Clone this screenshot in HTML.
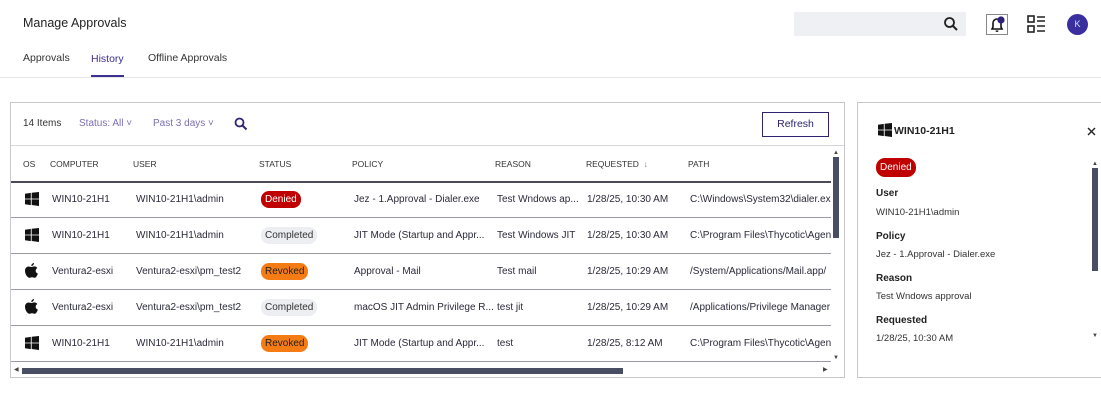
<!DOCTYPE html>
<html><head><meta charset="utf-8">
<style>
*{box-sizing:border-box;margin:0;padding:0}
body{width:1101px;height:401px;overflow:hidden;background:#fff;font-family:"Liberation Sans",sans-serif;color:#222;position:relative;font-size:10px}
.a{position:absolute;white-space:nowrap}
.hdr{font-size:8.5px;color:#333;top:159px}
.cell{font-size:10px;color:#2a2a3a}
.pill{position:absolute;height:17px;border-radius:8px;font-size:10px;display:flex;align-items:center;padding:0 4px;white-space:nowrap}
.den{background:#c00000;color:#fff}
.com{background:#eceef2;color:#333}
.rev{background:#f57c14;color:#222}
.sep{position:absolute;left:11px;width:820px;height:1px;background:#9a9aa4}
.lbl{font-size:10px;font-weight:bold;color:#222;left:876px}
.val{font-size:9.5px;color:#333;left:876px}
</style></head><body>
<div class="a" style="left:23px;top:16px;font-size:12.5px;color:#222">Manage Approvals</div>
<div class="a" style="left:23px;top:52px;font-size:10.5px;color:#333">Approvals</div>
<div class="a" style="left:91px;top:53px;font-size:10.5px;color:#3b2f8f">History</div>
<div class="a" style="left:91px;top:75px;width:33px;height:1.5px;background:#3b2f8f"></div>
<div class="a" style="left:148px;top:52px;font-size:10.5px;color:#333">Offline Approvals</div>
<div class="a" style="left:0;top:77px;width:1101px;height:1px;background:#e6e6ea"></div>

<div class="a" style="left:794px;top:12px;width:172px;height:24px;background:#eef0f3"></div>
<svg class="a" style="left:943px;top:16px" width="16" height="16" viewBox="0 0 16 16"><circle cx="6.5" cy="6.5" r="4.5" fill="none" stroke="#222" stroke-width="1.8"/><line x1="10" y1="10" x2="14" y2="14" stroke="#222" stroke-width="2"/></svg>
<svg class="a" style="left:986px;top:14px" width="22" height="21" viewBox="0 0 22 21"><rect x="0.5" y="0.5" width="21" height="20" fill="none" stroke="#888"/><path d="M6 15 L7 13 V9 a4 4 0 0 1 8 0 V13 L16 15 Z" fill="none" stroke="#111" stroke-width="1.6"/><path d="M9.5 16.5 a1.5 1.5 0 0 0 3 0" fill="#111"/><circle cx="15" cy="6" r="3.6" fill="#2d1f7a"/></svg>
<svg class="a" style="left:1027px;top:15px" width="19" height="19" viewBox="0 0 19 19" fill="none" stroke="#222" stroke-width="1.6"><rect x="1" y="1" width="6" height="6"/><rect x="1" y="11" width="6" height="6"/><path d="M10 2h8M10 6h8M10 11h8M10 16h8"/></svg>
<div class="a" style="left:1067px;top:14px;width:21px;height:21px;border-radius:50%;background:#3b2fa0;color:#bfe6ff;font-size:9px;text-align:center;line-height:21px">K</div>

<div class="a" style="left:10px;top:102px;width:835px;height:276px;border:1px solid #c8c8cc"></div>
<div class="a" style="left:11px;top:145px;width:833px;height:1px;background:#d6d6da"></div>
<div class="a" style="left:23px;top:118px;font-size:10px;color:#333">14 Items</div>
<div class="a" style="left:79px;top:118px;font-size:10px;color:#7b6fb0">Status: All &#x2C5;</div>
<div class="a" style="left:153px;top:118px;font-size:10px;color:#7b6fb0">Past 3 days &#x2C5;</div>
<svg class="a" style="left:234px;top:117px" width="14" height="14" viewBox="0 0 14 14"><circle cx="5.5" cy="5.5" r="4" fill="none" stroke="#2d2370" stroke-width="1.8"/><line x1="8.5" y1="8.5" x2="12.5" y2="12.5" stroke="#2d2370" stroke-width="2"/></svg>
<div class="a" style="left:762px;top:112px;width:67px;height:25px;border:1.3px solid #2d2370;font-size:10.5px;color:#2d2370;text-align:center;line-height:23px">Refresh</div>

<div class="a hdr" style="left:23px">OS</div>
<div class="a hdr" style="left:50px">COMPUTER</div>
<div class="a hdr" style="left:133px">USER</div>
<div class="a hdr" style="left:259px">STATUS</div>
<div class="a hdr" style="left:352px">POLICY</div>
<div class="a hdr" style="left:495px">REASON</div>
<div class="a hdr" style="left:586px">REQUESTED &nbsp;<span style="color:#7b6fb0">&#x2193;</span></div>
<div class="a hdr" style="left:688px">PATH</div>
<div class="a" style="left:11px;top:181px;width:820px;height:1.5px;background:#4a4a58"></div>
<div class="sep" style="top:217px"></div>
<div class="sep" style="top:253px"></div>
<div class="sep" style="top:289px"></div>
<div class="sep" style="top:325px"></div>
<div class="sep" style="top:361px"></div>

<div style="position:absolute;left:0;top:0;width:831px;height:401px;overflow:hidden">
<svg class="a" style="left:25px;top:192px" width="14" height="14" viewBox="0 0 13 13" fill="#111"><path d="M0 1.6l5.4-.8V6.1H0zM6.2.7L13 0v6.1H6.2zM0 6.9h5.4v5.3L0 11.4zM6.2 6.9H13V13l-6.8-.9z"/></svg>
<div class="a cell" style="left:52px;top:194px">WIN10-21H1</div>
<div class="a cell" style="left:136px;top:194px">WIN10-21H1\admin</div>
<div class="pill den" style="left:261px;top:191px">Denied</div>
<div class="a cell" style="left:354px;top:194px">Jez - 1.Approval - Dialer.exe</div>
<div class="a cell" style="left:497px;top:194px">Test Wndows ap...</div>
<div class="a cell" style="left:587px;top:194px">1/28/25, 10:30 AM</div>
<div class="a cell" style="left:690px;top:194px">C:\Windows\System32\dialer.exe</div>

<svg class="a" style="left:25px;top:228px" width="14" height="14" viewBox="0 0 13 13" fill="#111"><path d="M0 1.6l5.4-.8V6.1H0zM6.2.7L13 0v6.1H6.2zM0 6.9h5.4v5.3L0 11.4zM6.2 6.9H13V13l-6.8-.9z"/></svg>
<div class="a cell" style="left:52px;top:230px">WIN10-21H1</div>
<div class="a cell" style="left:136px;top:230px">WIN10-21H1\admin</div>
<div class="pill com" style="left:261px;top:227px">Completed</div>
<div class="a cell" style="left:354px;top:230px">JIT Mode (Startup and Appr...</div>
<div class="a cell" style="left:497px;top:230px">Test Windows JIT</div>
<div class="a cell" style="left:587px;top:230px">1/28/25, 10:30 AM</div>
<div class="a cell" style="left:690px;top:230px">C:\Program Files\Thycotic\Agent</div>

<svg class="a" style="left:25px;top:263px" width="13" height="15" viewBox="0 0 13 15" fill="#111"><path d="M9 0c0 1.5-1.2 3-2.7 3C6.2 1.5 7.5 .1 9 0zM6.5 4c1 0 1.8-.6 2.8-.6 1.2 0 2.3.6 3 1.6-2.4 1.3-2 4.8.6 5.6-.6 1.6-1.8 4.2-3.2 4.2-1 0-1.3-.6-2.6-.6-1.4 0-1.8.6-2.8.6C2.7 14.8 0 11.5 0 7.8 0 5.3 1.6 3.5 3.5 3.5 4.7 3.5 5.5 4 6.5 4z"/></svg>
<div class="a cell" style="left:52px;top:266px">Ventura2-esxi</div>
<div class="a cell" style="left:136px;top:266px">Ventura2-esxi\pm_test2</div>
<div class="pill rev" style="left:261px;top:263px">Revoked</div>
<div class="a cell" style="left:354px;top:266px">Approval - Mail</div>
<div class="a cell" style="left:497px;top:266px">Test mail</div>
<div class="a cell" style="left:587px;top:266px">1/28/25, 10:29 AM</div>
<div class="a cell" style="left:690px;top:266px">/System/Applications/Mail.app/</div>

<svg class="a" style="left:25px;top:299px" width="13" height="15" viewBox="0 0 13 15" fill="#111"><path d="M9 0c0 1.5-1.2 3-2.7 3C6.2 1.5 7.5 .1 9 0zM6.5 4c1 0 1.8-.6 2.8-.6 1.2 0 2.3.6 3 1.6-2.4 1.3-2 4.8.6 5.6-.6 1.6-1.8 4.2-3.2 4.2-1 0-1.3-.6-2.6-.6-1.4 0-1.8.6-2.8.6C2.7 14.8 0 11.5 0 7.8 0 5.3 1.6 3.5 3.5 3.5 4.7 3.5 5.5 4 6.5 4z"/></svg>
<div class="a cell" style="left:52px;top:302px">Ventura2-esxi</div>
<div class="a cell" style="left:136px;top:302px">Ventura2-esxi\pm_test2</div>
<div class="pill com" style="left:261px;top:299px">Completed</div>
<div class="a cell" style="left:354px;top:302px">macOS JIT Admin Privilege R...</div>
<div class="a cell" style="left:497px;top:302px">test jit</div>
<div class="a cell" style="left:587px;top:302px">1/28/25, 10:29 AM</div>
<div class="a cell" style="left:690px;top:302px">/Applications/Privilege Manager</div>

<svg class="a" style="left:25px;top:336px" width="14" height="14" viewBox="0 0 13 13" fill="#111"><path d="M0 1.6l5.4-.8V6.1H0zM6.2.7L13 0v6.1H6.2zM0 6.9h5.4v5.3L0 11.4zM6.2 6.9H13V13l-6.8-.9z"/></svg>
<div class="a cell" style="left:52px;top:338px">WIN10-21H1</div>
<div class="a cell" style="left:136px;top:338px">WIN10-21H1\admin</div>
<div class="pill rev" style="left:261px;top:335px">Revoked</div>
<div class="a cell" style="left:354px;top:338px">JIT Mode (Startup and Appr...</div>
<div class="a cell" style="left:497px;top:338px">test</div>
<div class="a cell" style="left:587px;top:338px">1/28/25, 8:12 AM</div>
<div class="a cell" style="left:690px;top:338px">C:\Program Files\Thycotic\Agent</div>
</div>

<div class="a" style="left:833px;top:157px;width:6px;height:81px;background:#4a4e64"></div>
<div class="a" style="left:833px;top:150px;font-size:6px;color:#444">&#x25B2;</div>
<div class="a" style="left:833px;top:355px;font-size:6px;color:#444">&#x25BC;</div>
<div class="a" style="left:22px;top:368px;width:601px;height:6px;background:#4a4e64"></div>
<div class="a" style="left:14px;top:366px;font-size:6px;color:#444">&#x25C0;</div>
<div class="a" style="left:823px;top:366px;font-size:6px;color:#444">&#x25B6;</div>

<div class="a" style="left:857px;top:102px;width:260px;height:276px;border:1px solid #c8c8cc"></div>
<svg class="a" style="left:878px;top:123px" width="14" height="14" viewBox="0 0 13 13" fill="#111"><path d="M0 1.6l5.4-.8V6.1H0zM6.2.7L13 0v6.1H6.2zM0 6.9h5.4v5.3L0 11.4zM6.2 6.9H13V13l-6.8-.9z"/></svg>
<div class="a" style="left:894px;top:125px;font-size:10.5px;font-weight:bold;color:#222">WIN10-21H1</div>
<svg class="a" style="left:1087px;top:127px" width="9" height="9" viewBox="0 0 9 9"><path d="M1 1l7 7M8 1l-7 7" stroke="#222" stroke-width="1.4"/></svg>
<div class="pill den" style="left:876px;top:158px;height:19px;border-radius:9px;padding:0 4px">Denied</div>
<div class="a lbl" style="top:188px">User</div>
<div class="a val" style="top:207px">WIN10-21H1\admin</div>
<div class="a lbl" style="top:231px">Policy</div>
<div class="a val" style="top:249px">Jez - 1.Approval - Dialer.exe</div>
<div class="a lbl" style="top:273px">Reason</div>
<div class="a val" style="top:291px">Test Wndows approval</div>
<div class="a lbl" style="top:315px">Requested</div>
<div class="a val" style="top:333px">1/28/25, 10:30 AM</div>
<div class="a" style="left:1092px;top:168px;width:6px;height:103px;background:#4a4e64"></div>
<div class="a" style="left:1092px;top:161px;font-size:6px;color:#444">&#x25B2;</div>
<div class="a" style="left:1092px;top:333px;font-size:6px;color:#444">&#x25BC;</div>
</body></html>
